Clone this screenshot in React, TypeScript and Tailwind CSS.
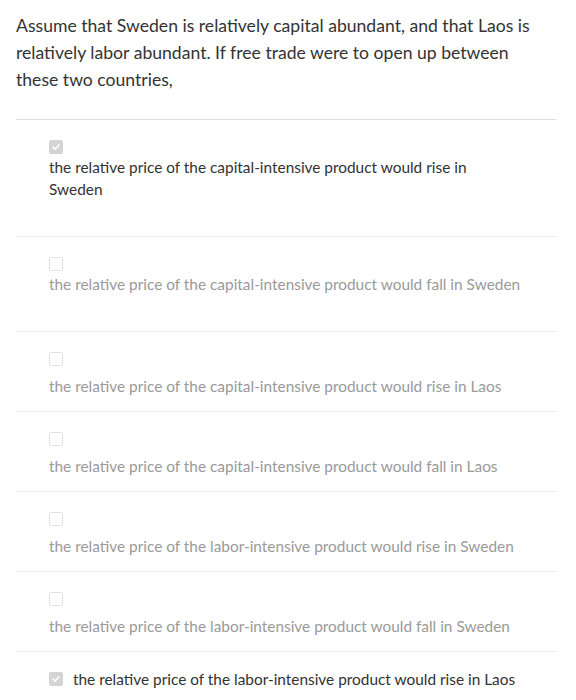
import React from 'react';

type Option = {
  id: number;
  text: string;
  checked: boolean;
  layout: 'stacked' | 'tight' | 'inline';
};

const options: Option[] = [
  { id: 1, text: 'the relative price of the capital-intensive product would rise in Sweden', checked: true, layout: 'tight' },
  { id: 2, text: 'the relative price of the capital-intensive product would fall in Sweden', checked: false, layout: 'tight' },
  { id: 3, text: 'the relative price of the capital-intensive product would rise in Laos', checked: false, layout: 'stacked' },
  { id: 4, text: 'the relative price of the capital-intensive product would fall in Laos', checked: false, layout: 'stacked' },
  { id: 5, text: 'the relative price of the labor-intensive product would rise in Sweden', checked: false, layout: 'stacked' },
  { id: 6, text: 'the relative price of the labor-intensive product would fall in Sweden', checked: false, layout: 'stacked' },
  { id: 7, text: 'the relative price of the labor-intensive product would rise in Laos', checked: true, layout: 'inline' },
];

const Box: React.FC<{ checked: boolean }> = ({ checked }) =>
  checked ? (
    <span className="flex h-[14px] w-[14px] shrink-0 items-center justify-center rounded-[2px] bg-[#d4d4d4]">
      <svg width="10" height="10" viewBox="0 0 10 10" fill="none">
        <path d="M2 5.2 L4.1 7.2 L8 2.8" stroke="#fff" strokeWidth="1.6" strokeLinecap="round" strokeLinejoin="round" />
      </svg>
    </span>
  ) : (
    <span className="block h-[14px] w-[14px] shrink-0 rounded-[2px] border border-[#e2e2e2] bg-white" />
  );

export default function App() {
  return (
    <div className="min-h-[700px] w-[576px] bg-white pt-3 font-['Lato','Open_Sans',sans-serif]">
      <div className="px-4">
        <p className="w-[528px] text-[17.6px] leading-[27px] text-[#333]">
          Assume that Sweden is relatively capital abundant, and that Laos is relatively labor abundant. If free trade were to open up between these two countries,
        </p>
        <div className="mt-[26px] w-[540px]">
          {options.map((o, i) => {
            const color = o.checked ? 'text-[#333]' : 'text-[#9a9a9a]';
            const border = i === 0 ? 'border-[#dedede]' : 'border-[#ececec]';
            if (o.layout === 'inline') {
              return (
                <div key={o.id} className={`flex items-center gap-[10px] border-t ${border} pl-[33px] pt-[16px]`}>
                  <Box checked={o.checked} />
                  <span className={`text-[15.4px] leading-[22px] ${color}`}>{o.text}</span>
                </div>
              );
            }
            return (
              <div
                key={o.id}
                className={`border-t ${border} pl-[33px] pt-[20px] ${o.layout === 'tight' ? 'pb-[36px]' : 'pb-[14px]'}`}
              >
                <Box checked={o.checked} />
                <p
                  className={`w-[474px] text-[15.4px] leading-[22px] ${color} ${o.layout === 'tight' ? 'mt-[2px]' : 'mt-[9px]'}`}
                >
                  {o.text}
                </p>
              </div>
            );
          })}
        </div>
      </div>
    </div>
  );
}
